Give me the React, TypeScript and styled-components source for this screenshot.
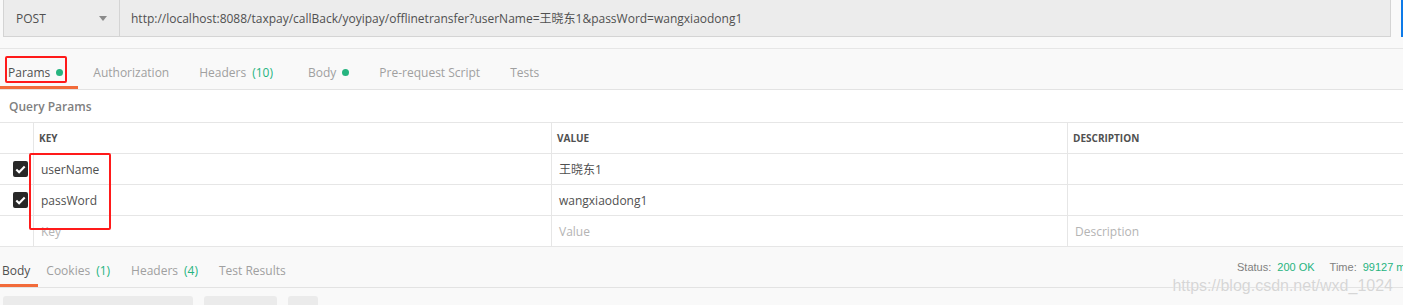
import React from 'react';
import styled, { createGlobalStyle } from 'styled-components';

const GlobalStyle = createGlobalStyle`
    html, body {
        margin: 0;
        padding: 0;
        background: #f9f9f9;
        overflow: hidden;
    }
    body {
        font-family: 'Open Sans', 'Noto Sans CJK SC', sans-serif;
        color: #505050;
    }
`;

const Page = styled.div`
    position: relative;
    width: 1403px;
    height: 305px;
    overflow: hidden;
    background: #f9f9f9;
`;

const RequestBar = styled.div`
    display: flex;
    height: 38px;
    padding-left: 3px;
    gap: 10px;
`;

const UrlGroup = styled.div`
    display: flex;
    width: 1388px;
    height: 37px;
    background: #ececec;
    border: 1px solid #d4d4d4;
    border-top: none;
    box-sizing: border-box;
`;

const MethodSelect = styled.div`
    display: flex;
    align-items: center;
    justify-content: space-between;
    width: 116px;
    padding: 0 12px 0 12px;
    box-sizing: border-box;
    border-right: 1px solid #d4d4d4;
    font-size: 12px;
    color: #505050;
`;

const Caret = styled.span`
    width: 0;
    height: 0;
    border-left: 4px solid transparent;
    border-right: 4px solid transparent;
    border-top: 5px solid #8a8a8a;
`;

const UrlText = styled.div`
    display: flex;
    align-items: center;
    padding-left: 11px;
    font-size: 12px;
    color: #505050;
    white-space: nowrap;
`;

const SendButton = styled.div`
    flex: 1;
    height: 37px;
    background: #0d7ae8;
`;

const TabBar = styled.div<{ $top?: boolean }>`
    display: flex;
    align-items: stretch;
    height: 40px;
    margin-top: ${(p) => (p.$top ? '10px' : '0')};
    border-top: ${(p) => (p.$top ? '1px solid #e6e6e6' : 'none')};
    border-bottom: 1px solid #e3e3e3;
    background: #f9f9f9;
`;

const Tab = styled.div<{ $active?: boolean; $pad: number; $first?: number }>`
    position: relative;
    display: flex;
    align-items: center;
    gap: 6px;
    padding: 6px ${(p) => p.$pad}px 0 ${(p) => p.$pad}px;
    font-size: 12px;
    color: ${(p) => (p.$active ? '#505050' : '#a0a0a0')};
    white-space: nowrap;
    box-sizing: border-box;

    &:first-child {
        padding-left: ${(p) => p.$first ?? p.$pad}px;
    }

    &::after {
        content: '';
        display: ${(p) => (p.$active ? 'block' : 'none')};
        position: absolute;
        left: 0;
        right: 0;
        bottom: 0;
        height: 3px;
        background: #f26b3a;
    }
`;

const Count = styled.span`
    margin-right: 5px;
    color: #26b47f;
`;

const Dot = styled.span`
    width: 7px;
    height: 7px;
    border-radius: 50%;
    background: #26b47f;
`;

const RedMark = styled.div`
    position: absolute;
    border: 2px solid #ff1a1a;
    border-radius: 2px;
    box-sizing: border-box;
    pointer-events: none;
`;

const ParamsPanel = styled.div`
    background: #ffffff;
`;

const SectionTitle = styled.div`
    height: 32px;
    display: flex;
    align-items: center;
    padding-left: 9px;
    font-size: 12px;
    font-weight: 600;
    color: #808080;
`;

const Table = styled.div`
    position: relative;
    border-bottom: 1px solid #e6e6e6;
`;

const Row = styled.div`
    display: grid;
    grid-template-columns: 33px 518px 516px 1fr;
    height: 31px;
    border-top: 1px solid #e6e6e6;
    box-sizing: border-box;
`;

const CheckCell = styled.div`
    display: flex;
    align-items: center;
    justify-content: flex-end;
    padding-right: 5px;
`;

const Cell = styled.div<{ $muted?: boolean }>`
    display: flex;
    align-items: center;
    padding-left: 7px;
    border-left: 1px solid #e6e6e6;
    font-size: 12px;
    color: ${(p) => (p.$muted ? '#b4b4b4' : '#505050')};
    white-space: nowrap;
    overflow: hidden;
`;

const HeadCell = styled(Cell)`
    padding-left: 5px;
    font-size: 10px;
    font-weight: 700;
    color: #505050;
`;

const Checkbox = styled.span`
    display: flex;
    align-items: center;
    justify-content: center;
    width: 15px;
    height: 16px;
    border-radius: 2px;
    background: #282828;
`;

const StatusGroup = styled.div`
    display: flex;
    align-items: center;
    margin-left: auto;
    margin-right: -23px;
    font-family: 'Liberation Sans', Arial, sans-serif;
    font-size: 11px;
    white-space: nowrap;
`;

const StatusLabel = styled.span`
    color: #808080;
    margin-right: 6px;
`;

const StatusValue = styled.span`
    color: #26b47f;
    margin-right: 15px;
`;

const ButtonRow = styled.div`
    display: flex;
    gap: 11px;
    padding: 8px 0 0 3px;
`;

const GhostButton = styled.div<{ $w: number }>`
    width: ${(p) => p.$w}px;
    height: 24px;
    border-radius: 3px;
    background: #ebebeb;
`;

const Watermark = styled.div`
    position: absolute;
    right: 10px;
    top: 277px;
    font-family: 'Liberation Sans', Arial, sans-serif;
    font-size: 16px;
    color: #d6d6d6;
    text-shadow: 0 0 1px #ffffff;
    pointer-events: none;
`;

const Check = () => (
    <svg width="11" height="9" viewBox="0 0 11 9">
        <path d="M1.3 4.6 L4.1 7.3 L9.7 1.6" fill="none" stroke="#fff" strokeWidth="2.1" />
    </svg>
);

const params = [
    { key: 'userName', value: '王晓东1' },
    { key: 'passWord', value: 'wangxiaodong1' },
];

const requestTabs = [
    { label: 'Params', dot: true, active: true },
    { label: 'Authorization' },
    { label: 'Headers', count: '(10)' },
    { label: 'Body', dot: true },
    { label: 'Pre-request Script' },
    { label: 'Tests' },
];

const responseTabs = [
    { label: 'Body', active: true },
    { label: 'Cookies', count: '(1)' },
    { label: 'Headers', count: '(4)' },
    { label: 'Test Results' },
];

const App = () => (
    <Page>
        <GlobalStyle />
        <RequestBar>
            <UrlGroup>
                <MethodSelect>
                    POST
                    <Caret />
                </MethodSelect>
                <UrlText>
                    http://localhost:8088/taxpay/callBack/yoyipay/offlinetransfer?userName=王晓东1&amp;passWord=wangxiaodong1
                </UrlText>
            </UrlGroup>
            <SendButton />
        </RequestBar>

        <TabBar $top>
            {requestTabs.map((t) => (
                <Tab key={t.label} $active={t.active} $pad={15} $first={8}>
                    {t.label}
                    {t.count && <Count>{t.count}</Count>}
                    {t.dot && <Dot />}
                    {t.active && <RedMark style={{ left: 5, top: 7, width: 62, height: 27 }} />}
                </Tab>
            ))}
        </TabBar>

        <ParamsPanel>
            <SectionTitle>Query Params</SectionTitle>
            <Table>
                <Row>
                    <CheckCell />
                    <HeadCell>KEY</HeadCell>
                    <HeadCell>VALUE</HeadCell>
                    <HeadCell>DESCRIPTION</HeadCell>
                </Row>
                {params.map((p) => (
                    <Row key={p.key}>
                        <CheckCell>
                            <Checkbox>
                                <Check />
                            </Checkbox>
                        </CheckCell>
                        <Cell>{p.key}</Cell>
                        <Cell>{p.value}</Cell>
                        <Cell />
                    </Row>
                ))}
                <Row>
                    <CheckCell />
                    <Cell $muted>Key</Cell>
                    <Cell $muted>Value</Cell>
                    <Cell $muted>Description</Cell>
                </Row>
                <RedMark style={{ left: 29, top: 31, width: 82, height: 77 }} />
            </Table>
        </ParamsPanel>

        <TabBar>
            {responseTabs.map((t) => (
                <Tab key={t.label} $active={t.active} $pad={8} $first={2}>
                    {t.label}
                    {t.count && <Count>{t.count}</Count>}
                </Tab>
            ))}
            <StatusGroup>
                <StatusLabel>Status:</StatusLabel>
                <StatusValue>200 OK</StatusValue>
                <StatusLabel>Time:</StatusLabel>
                <StatusValue>99127 ms</StatusValue>
            </StatusGroup>
        </TabBar>

        <ButtonRow>
            <GhostButton $w={190} />
            <GhostButton $w={73} />
            <GhostButton $w={30} />
        </ButtonRow>

        <Watermark>https://blog.csdn.net/wxd_1024</Watermark>
    </Page>
);

export default App;
